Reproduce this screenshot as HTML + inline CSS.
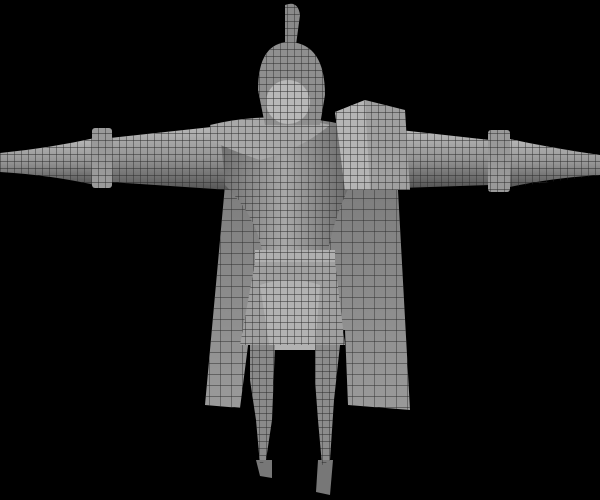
<!DOCTYPE html>
<html><head><style>html,body{margin:0;padding:0;background:#000;width:600px;height:500px;overflow:hidden}</style></head>
<body>
<svg width="600" height="500" viewBox="0 0 600 500" xmlns="http://www.w3.org/2000/svg">
<defs>
<pattern id="g" width="7" height="7" patternUnits="userSpaceOnUse"><path d="M0 0H7M0 0V7" stroke="#2a2a2a" stroke-width="0.9" fill="none"/></pattern>
<pattern id="g2" width="11" height="11" patternUnits="userSpaceOnUse"><path d="M0 0H11M0 0V11" stroke="#2e2e2e" stroke-width="0.9" fill="none"/></pattern>
<linearGradient id="arm" x1="0" y1="0" x2="0" y2="1"><stop offset="0" stop-color="#b8b8b8"/><stop offset="0.5" stop-color="#959595"/><stop offset="1" stop-color="#555"/></linearGradient>
<linearGradient id="body" x1="0" y1="0" x2="1" y2="0"><stop offset="0" stop-color="#707070"/><stop offset="0.5" stop-color="#a8a8a8"/><stop offset="1" stop-color="#6a6a6a"/></linearGradient>
<linearGradient id="cape" x1="0" y1="0" x2="0" y2="1"><stop offset="0" stop-color="#7a7a7a"/><stop offset="1" stop-color="#9a9a9a"/></linearGradient>
</defs>
<rect width="600" height="500" fill="#000"/>
<g>
<path d="M225 185 L205 405 L240 408 L250 330 L345 330 L348 405 L410 410 L398 190 L380 160 L240 160Z" fill="url(#cape)"/>
<path d="M225 185 L205 405 L240 408 L250 330 L345 330 L348 405 L410 410 L398 190 L380 160 L240 160Z" fill="url(#g2)"/>
</g>
<g>
<path d="M0 153 Q50 148 95 138 L95 185 Q50 175 0 172Z" fill="url(#arm)"/>
<path d="M505 138 Q550 148 600 155 L600 175 Q550 178 505 188Z" fill="url(#arm)"/>
<path d="M110 138 L230 125 L230 190 L110 182Z" fill="url(#arm)"/>
<path d="M400 130 L490 140 L490 185 L400 188Z" fill="url(#arm)"/>
<rect x="92" y="128" width="20" height="60" rx="3" fill="#9a9a9a"/>
<rect x="488" y="130" width="22" height="62" rx="3" fill="#999"/>
<path d="M0 153 Q50 148 95 138 L95 185 Q50 175 0 172Z M110 138 L230 125 L230 190 L110 182Z M400 130 L490 140 L490 185 L400 188Z M505 138 L600 155 L600 175 L505 188Z M92 128h20v60h-20z M488 130h22v62h-22z" fill="url(#g)"/>
</g>
<g>
<path d="M220 130 Q290 110 345 125 L350 185 Q335 215 328 250 L262 250 Q255 215 225 185Z" fill="url(#body)"/>
<path d="M210 125 Q270 110 330 125 Q300 150 260 160 Q230 150 210 140Z" fill="#a8a8a8"/>
<path d="M335 112 L365 100 L405 110 L410 190 L345 190 L340 150Z" fill="#a0a0a0"/>
<path d="M335 112 L365 100 L370 190 L345 190 L340 150Z" fill="#b5b5b5"/>
<path d="M220 130 Q290 110 345 125 L350 185 Q335 215 328 250 L262 250 Q255 215 225 185Z M210 125 Q270 110 330 125 Q300 150 260 160 Q230 150 210 140Z M335 112 L365 100 L405 110 L410 190 L345 190 L340 150Z" fill="url(#g)"/>
</g>
<g>
<path d="M285 5 Q298 0 300 15 L296 45 L285 45Z" fill="#8a8a8a"/>
<path d="M258 90 Q258 42 290 42 Q325 44 325 95 L320 125 L265 125Z" fill="#8f8f8f"/>
<circle cx="288" cy="102" r="22" fill="#b8b8b8"/>
<path d="M285 5 Q298 0 300 15 L296 45 L285 45Z M258 90 Q258 42 290 42 Q325 44 325 95 L320 125 L265 125Z" fill="url(#g)"/>
<circle cx="288" cy="102" r="22" fill="url(#g)"/>
</g>
<g>
<rect x="255" y="250" width="80" height="12" fill="#b0b0b0"/>
<path d="M255 262 L335 262 L345 345 L240 345Z" fill="#a0a0a0"/>
<path d="M260 285 Q290 275 320 285 L315 350 L270 350Z" fill="#b2b2b2"/>
<path d="M255 250h80v12h-80z M255 262 L335 262 L345 345 L240 345Z" fill="url(#g)"/>
</g>
<g>
<path d="M250 345 L275 345 L272 420 L266 460 L260 465 L256 420 L250 380Z" fill="#8a8a8a"/>
<path d="M315 345 L340 345 L334 400 L330 460 L322 465 L318 420 L315 380Z" fill="#8c8c8c"/>
<path d="M256 460 L272 460 L272 478 L260 476Z" fill="#777"/>
<path d="M318 460 L333 460 L330 495 L316 492Z" fill="#777"/>
<path d="M250 345 L275 345 L272 420 L266 460 L260 465 L256 420 L250 380Z M315 345 L340 345 L334 400 L330 460 L322 465 L318 420 L315 380Z" fill="url(#g)"/>
</g>
</svg>
</body></html>
